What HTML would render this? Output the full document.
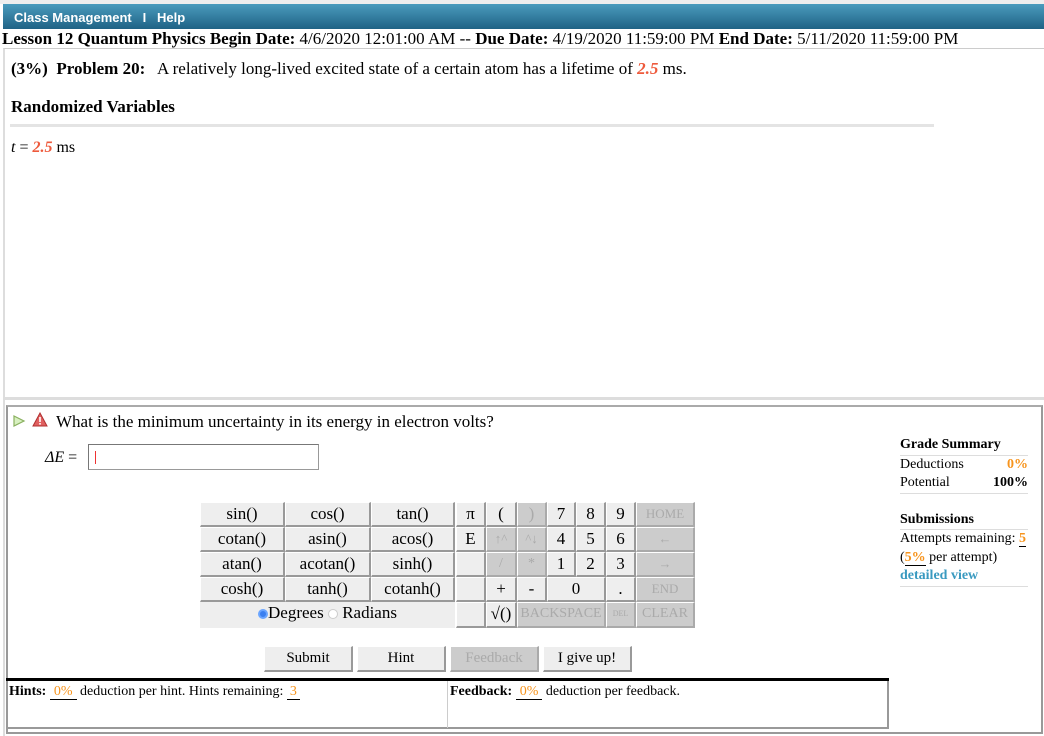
<!DOCTYPE html>
<html><head><meta charset="utf-8"><style>
*{margin:0;padding:0;box-sizing:border-box}
body{width:1044px;height:736px;background:#fff;font-family:"Liberation Serif",serif;color:#000;position:relative;overflow:hidden}
.a{position:absolute;white-space:nowrap}
.k{position:absolute;background:#eee;border-top:1px solid #fff;border-left:1px solid #fff;border-right:2px solid #999;border-bottom:2px solid #999;font-size:17px;text-align:center;line-height:22px}
.d{background:#ccc;color:#aaa;border-right-color:#aaa;border-bottom-color:#aaa}
.o{color:#f7941d;font-weight:bold}
.r{color:#ee5a3c;font-weight:bold;font-style:italic}
.b{font-weight:bold}
</style></head><body>
<div class="a" style="left:0;top:0;width:1044px;height:4px;background:#eee"></div>
<div class="a" style="left:3px;top:4px;width:1041px;height:25px;background:linear-gradient(#4a9bbd,#1f6285);color:#fff;font-family:'Liberation Sans',sans-serif;font-weight:bold;font-size:13px;line-height:27px;padding-left:11px">Class Management &nbsp;&nbsp;I&nbsp;&nbsp; Help</div>
<div class="a" style="left:2px;top:29px;font-size:17px;line-height:20px"><b>Lesson 12 Quantum Physics Begin Date:</b> 4/6/2020 12:01:00 AM -- <b>Due Date:</b> 4/19/2020 11:59:00 PM <b>End Date:</b> 5/11/2020 11:59:00 PM</div>
<div class="a" style="left:3px;top:48px;width:1041px;height:688px;border-left:2px solid #ddd;border-top:1px solid #ccc"></div>
<div class="a" style="left:11px;top:59px;font-size:17px;line-height:20px"><b>(3%)&nbsp; Problem 20:</b>&nbsp;&nbsp; A relatively long-lived excited state of a certain atom has a lifetime of <span class="r">2.5</span> ms.</div>
<div class="a b" style="left:11px;top:97px;font-size:17px;line-height:20px">Randomized Variables</div>
<div class="a" style="left:10px;top:124px;width:924px;height:3px;background:#e4e4e4"></div>
<div class="a" style="left:11px;top:138px;font-size:16px;line-height:20px"><i>t</i> = <span class="r">2.5</span> ms</div>
<div class="a" style="left:5px;top:397px;width:1039px;height:3px;background:#ddd"></div>
<div class="a" style="left:6px;top:405px;width:1037px;height:329px;border:2px solid #999;border-top-color:#aaa"></div>
<svg class="a" style="left:12px;top:414px" width="14" height="14"><path d="M2 2 L12 7 L2 12 Z" fill="#d8f0c0" stroke="#8ab060" stroke-width="1.2"/></svg>
<svg class="a" style="left:32px;top:412px" width="16" height="16"><path d="M8 1 L15 14 L1 14 Z" fill="#e06060" stroke="#b03030"/><rect x="7.2" y="5" width="1.6" height="5" fill="#fff"/><rect x="7.2" y="11" width="1.6" height="1.6" fill="#fff"/></svg>
<div class="a" style="left:56px;top:412px;font-size:17px;line-height:20px">What is the minimum uncertainty in its energy in electron volts?</div>
<div class="a" style="left:45px;top:449px;font-size:16px;line-height:18px"><i>ΔE</i> =</div>
<div class="a" style="left:88px;top:444px;width:231px;height:26px;border:1px solid #999;border-top-color:#777;border-left-color:#777;background:#fff"></div>
<div class="a" style="left:95px;top:451px;width:1px;height:13px;background:#e33"></div>
<div class="k" style="left:200px;top:502px;width:85px;height:25px">sin()</div>
<div class="k" style="left:285px;top:502px;width:86px;height:25px">cos()</div>
<div class="k" style="left:371px;top:502px;width:84px;height:25px">tan()</div>
<div class="k" style="left:200px;top:527px;width:85px;height:25px">cotan()</div>
<div class="k" style="left:285px;top:527px;width:86px;height:25px">asin()</div>
<div class="k" style="left:371px;top:527px;width:84px;height:25px">acos()</div>
<div class="k" style="left:200px;top:552px;width:85px;height:25px">atan()</div>
<div class="k" style="left:285px;top:552px;width:86px;height:25px">acotan()</div>
<div class="k" style="left:371px;top:552px;width:84px;height:25px">sinh()</div>
<div class="k" style="left:200px;top:577px;width:85px;height:25px">cosh()</div>
<div class="k" style="left:285px;top:577px;width:86px;height:25px">tanh()</div>
<div class="k" style="left:371px;top:577px;width:84px;height:25px">cotanh()</div>
<div class="a" style="left:200px;top:602px;width:255px;height:26px;background:#eee;font-size:17px;line-height:22px;text-align:center"><span style="display:inline-block;width:10px;height:10px;border-radius:50%;background:#3a7ff0;border:2px solid #6aa5ff;vertical-align:-1px"></span>Degrees <span style="display:inline-block;width:10px;height:10px;border-radius:50%;background:#fff;border:1px solid #ccc;vertical-align:-1px"></span> Radians</div>
<div class="k" style="left:456px;top:502px;width:30px;height:25px">π</div>
<div class="k" style="left:486px;top:502px;width:31px;height:25px">(</div>
<div class="k d" style="left:517px;top:502px;width:30px;height:25px">)</div>
<div class="k" style="left:547px;top:502px;width:29px;height:25px">7</div>
<div class="k" style="left:576px;top:502px;width:30px;height:25px">8</div>
<div class="k" style="left:606px;top:502px;width:30px;height:25px">9</div>
<div class="k d" style="left:636px;top:502px;width:59px;height:25px;font-size:13px">HOME</div>
<div class="k" style="left:456px;top:527px;width:30px;height:25px">E</div>
<div class="k d" style="left:486px;top:527px;width:31px;height:25px;font-size:13px">↑^</div>
<div class="k d" style="left:517px;top:527px;width:30px;height:25px;font-size:13px">^↓</div>
<div class="k" style="left:547px;top:527px;width:29px;height:25px">4</div>
<div class="k" style="left:576px;top:527px;width:30px;height:25px">5</div>
<div class="k" style="left:606px;top:527px;width:30px;height:25px">6</div>
<div class="k d" style="left:636px;top:527px;width:59px;height:25px;font-size:13px">←</div>
<div class="k" style="left:456px;top:552px;width:30px;height:25px"></div>
<div class="k d" style="left:486px;top:552px;width:31px;height:25px;font-size:14px">/</div>
<div class="k d" style="left:517px;top:552px;width:30px;height:25px;font-size:14px">*</div>
<div class="k" style="left:547px;top:552px;width:29px;height:25px">1</div>
<div class="k" style="left:576px;top:552px;width:30px;height:25px">2</div>
<div class="k" style="left:606px;top:552px;width:30px;height:25px">3</div>
<div class="k d" style="left:636px;top:552px;width:59px;height:25px;font-size:13px">→</div>
<div class="k" style="left:456px;top:577px;width:30px;height:25px"></div>
<div class="k" style="left:486px;top:577px;width:31px;height:25px">+</div>
<div class="k" style="left:517px;top:577px;width:30px;height:25px">-</div>
<div class="k" style="left:547px;top:577px;width:59px;height:25px">0</div>
<div class="k" style="left:606px;top:577px;width:30px;height:25px">.</div>
<div class="k d" style="left:636px;top:577px;width:59px;height:25px;font-size:13px">END</div>
<div class="k" style="left:456px;top:602px;width:30px;height:26px"></div>
<div class="k" style="left:486px;top:602px;width:31px;height:26px">√()</div>
<div class="k d" style="left:517px;top:602px;width:89px;height:26px;font-size:14px">BACKSPACE</div>
<div class="k d" style="left:606px;top:602px;width:30px;height:26px;font-size:8px">DEL</div>
<div class="k d" style="left:636px;top:602px;width:59px;height:26px;font-size:14px">CLEAR</div>
<div class="k" style="left:264px;top:646px;width:89px;height:26px;font-size:15px">Submit</div>
<div class="k" style="left:357px;top:646px;width:89px;height:26px;font-size:15px">Hint</div>
<div class="k d" style="left:450px;top:646px;width:89px;height:26px;font-size:15px">Feedback</div>
<div class="k" style="left:543px;top:646px;width:89px;height:26px;font-size:15px">I give up!</div>
<div class="a" style="left:6px;top:678px;width:883px;height:3px;background:#000"></div>
<div class="a" style="left:6px;top:681px;width:883px;height:48px;border:2px solid #999;border-top:none"></div>
<div class="a" style="left:447px;top:681px;width:1px;height:47px;background:#ccc"></div>
<div class="a" style="left:9px;top:684px;font-size:14px;line-height:16px"><b>Hints:</b> <span class="o" style="font-weight:normal;border-bottom:1px solid #000;padding:0 4px">0%</span> deduction per hint. Hints remaining: <span class="o" style="font-weight:normal;border-bottom:1px solid #000;padding:0 3px">3</span></div>
<div class="a" style="left:450px;top:684px;font-size:14px;line-height:16px"><b>Feedback:</b> <span class="o" style="font-weight:normal;border-bottom:1px solid #000;padding:0 4px">0%</span> deduction per feedback.</div>
<div class="a" style="left:900px;top:436px;width:128px;font-size:14px;line-height:18.5px">
<div class="b" style="border-bottom:1px solid #ddd">Grade Summary</div>
<div>Deductions<span class="o" style="float:right">0%</span></div>
<div style="border-bottom:1px solid #ddd">Potential<span class="b" style="float:right">100%</span></div>
<div class="b" style="margin-top:17px;border-bottom:1px solid #ddd">Submissions</div>
<div>Attempts remaining: <span class="o" style="border-bottom:1px solid #000">5</span></div>
<div>(<span class="o" style="border-bottom:1px solid #000">5%</span> per attempt)</div>
<div class="b" style="color:#3a9ac0;border-bottom:1px solid #ddd">detailed view</div>
</div>
</body></html>
